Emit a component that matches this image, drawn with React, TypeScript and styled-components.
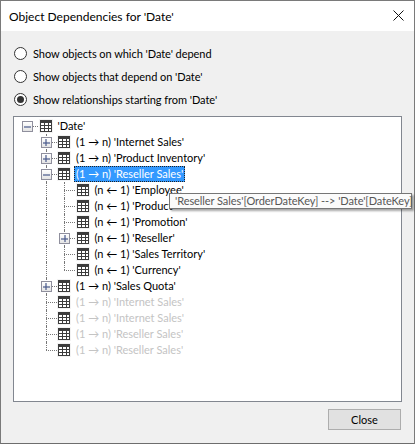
import React from 'react';
import styled, { createGlobalStyle } from 'styled-components';

const GlobalStyle = createGlobalStyle`
  html, body {
    margin: 0;
    padding: 0;
    background: #fff;
  }
  body {
    font-family: Lato, "Liberation Sans", "DejaVu Sans", sans-serif;
    font-size: 11px;
    color: #000;
  }
`;

const Window = styled.div`
  position: relative;
  box-sizing: border-box;
  width: 415px;
  height: 444px;
  display: flex;
  flex-direction: column;
  background: #f0f0f0;
  border: 1px solid #7a7a7a;
  border-bottom-color: #6d6d6d;
`;

const TitleBar = styled.div`
  height: 30px;
  flex: none;
  display: flex;
  align-items: center;
  justify-content: space-between;
  padding: 0 10px 0 8px;
  background: #fff;
  font-size: 12px;
`;

const CloseIcon = styled.svg`
  width: 11px;
  height: 11px;
  display: block;
  margin-bottom: 1px;
`;

const Body = styled.div`
  flex: 1;
  display: flex;
  flex-direction: column;
  padding: 14px 12px 12px 12px;
  min-height: 0;
`;

const RadioGroup = styled.div`
  display: flex;
  flex-direction: column;
  gap: 7px;
  padding-left: 1px;
  margin-bottom: 9px;
  letter-spacing: -0.05px;
`;

const RadioRow = styled.label`
  display: flex;
  align-items: center;
  gap: 6px;
  height: 16px;
`;

const RadioMark = styled.span<{ $checked?: boolean }>`
  box-sizing: border-box;
  width: 13px;
  height: 13px;
  border-radius: 50%;
  border: 1px solid #333;
  background: #fff;
  display: flex;
  align-items: center;
  justify-content: center;
  &::after {
    content: '';
    display: ${(p) => (p.$checked ? 'block' : 'none')};
    width: 7px;
    height: 7px;
    border-radius: 50%;
    background: #333;
  }
`;

const TreeBox = styled.div`
  box-sizing: border-box;
  height: 286px;
  flex: none;
  background: #fff;
  border: 1px solid #828790;
  padding: 1px 0 0 4px;
`;

const Row = styled.div`
  display: flex;
  height: 16px;
  align-items: stretch;
`;

const Guide = styled.span<{ $kind: 'blank' | 'pipe' | 'tee' | 'elbow' | 'dash' }>`
  position: relative;
  width: 18.5px;
  flex: none;
  &::before {
    content: '';
    position: absolute;
    left: 9px;
    top: 0;
    height: ${(p) => (p.$kind === 'elbow' ? '8px' : '100%')};
    border-left: 1px dotted #777;
    display: ${(p) => (p.$kind === 'blank' || p.$kind === 'dash' ? 'none' : 'block')};
  }
  &::after {
    content: '';
    position: absolute;
    left: 9px;
    top: 8px;
    width: 11px;
    border-top: 1px dotted #777;
    display: ${(p) => (p.$kind === 'blank' || p.$kind === 'pipe' ? 'none' : 'block')};
  }
`;

const Expander = styled.span<{ $open?: boolean }>`
  position: absolute;
  z-index: 1;
  box-sizing: border-box;
  left: 4px;
  top: 3px;
  width: 11px;
  height: 11px;
  background: linear-gradient(#fff, #e4e4e4);
  border: 1px solid #8f8f9d;
  &::before {
    content: '';
    position: absolute;
    left: 1px;
    top: 3.5px;
    width: 7px;
    height: 2px;
    background: #4a5a8c;
    transform: scaleY(0.6);
  }
  &::after {
    content: '';
    display: ${(p) => (p.$open ? 'none' : 'block')};
    position: absolute;
    left: 3.5px;
    top: 1px;
    width: 2px;
    height: 7px;
    background: #4a5a8c;
    transform: scaleX(0.6);
  }
`;

const TableGlyph = styled.svg`
  width: 14px;
  height: 14px;
  flex: none;
  margin: 1px 0 0 2px;
  display: block;
`;

const Label = styled.span<{ $muted?: boolean; $selected?: boolean }>`
  box-sizing: border-box;
  margin-left: 3px;
  padding: 0 2px;
  height: 16px;
  line-height: 15px;
  white-space: nowrap;
  color: ${(p) => (p.$selected ? '#fff' : p.$muted ? '#c4c4c4' : '#000')};
  background: ${(p) => (p.$selected ? '#3399ff' : 'transparent')};
  outline: ${(p) => (p.$selected ? '1px dotted #222' : 'none')};
  outline-offset: -1px;
`;

const Footer = styled.div`
  flex: 1;
  display: flex;
  justify-content: flex-end;
  align-items: flex-start;
  padding: 7px 1px 0 0;
`;

const CloseButton = styled.button`
  box-sizing: border-box;
  width: 73px;
  height: 21px;
  padding: 0;
  font: inherit;
  color: #000;
  background: #e1e1e1;
  border: 1px solid #adadad;
`;

const Tip = styled.div`
  position: absolute;
  left: 168px;
  top: 192px;
  box-sizing: border-box;
  width: 243px;
  height: 16px;
  padding: 0 0 0 5px;
  line-height: 14px;
  white-space: nowrap;
  letter-spacing: -0.07px;
  color: #575757;
  background: #fbfbfb;
  border: 1px solid #767676;
  box-shadow: 2px 2px 2px rgba(0, 0, 0, 0.35);
`;

const TableIcon = () => (
  <TableGlyph viewBox="0 0 14 14" shapeRendering="crispEdges">
    <rect x="0" y="0" width="14" height="14" fill="#f3f3f3" />
    <rect x="1" y="1" width="12" height="12" fill="#3c3c3c" />
    <rect x="2" y="4" width="2.5" height="2" fill="#fff" />
    <rect x="5.5" y="4" width="3" height="2" fill="#fff" />
    <rect x="9.5" y="4" width="2.5" height="2" fill="#fff" />
    <rect x="2" y="7" width="2.5" height="2" fill="#fff" />
    <rect x="5.5" y="7" width="3" height="2" fill="#fff" />
    <rect x="9.5" y="7" width="2.5" height="2" fill="#fff" />
    <rect x="2" y="10" width="2.5" height="2" fill="#fff" />
    <rect x="5.5" y="10" width="3" height="2" fill="#fff" />
    <rect x="9.5" y="10" width="2.5" height="2" fill="#fff" />
  </TableGlyph>
);

type GuideKind = 'blank' | 'pipe' | 'tee' | 'elbow' | 'dash';

type Node = {
  guides: GuideKind[];
  text: string;
  toggle?: 'open' | 'closed';
  muted?: boolean;
  selected?: boolean;
};

const nodes: Node[] = [
  { guides: ['dash'], toggle: 'open', text: "'Date'" },
  { guides: ['blank', 'tee'], toggle: 'closed', text: "(1 → n) 'Internet Sales'" },
  { guides: ['blank', 'tee'], toggle: 'closed', text: "(1 → n) 'Product Inventory'" },
  { guides: ['blank', 'tee'], toggle: 'open', text: "(1 → n) 'Reseller Sales'", selected: true },
  { guides: ['blank', 'pipe', 'tee'], text: "(n ← 1) 'Employee'" },
  { guides: ['blank', 'pipe', 'tee'], text: "(n ← 1) 'Product'" },
  { guides: ['blank', 'pipe', 'tee'], text: "(n ← 1) 'Promotion'" },
  { guides: ['blank', 'pipe', 'tee'], toggle: 'closed', text: "(n ← 1) 'Reseller'" },
  { guides: ['blank', 'pipe', 'tee'], text: "(n ← 1) 'Sales Territory'" },
  { guides: ['blank', 'pipe', 'elbow'], text: "(n ← 1) 'Currency'" },
  { guides: ['blank', 'tee'], toggle: 'closed', text: "(1 → n) 'Sales Quota'" },
  { guides: ['blank', 'tee'], text: "(1 → n) 'Internet Sales'", muted: true },
  { guides: ['blank', 'tee'], text: "(1 → n) 'Internet Sales'", muted: true },
  { guides: ['blank', 'tee'], text: "(1 → n) 'Reseller Sales'", muted: true },
  { guides: ['blank', 'elbow'], text: "(1 → n) 'Reseller Sales'", muted: true },
];

const radios = [
  { text: "Show objects on which 'Date' depend" },
  { text: "Show objects that depend on 'Date'" },
  { text: "Show relationships starting from 'Date'", checked: true },
];

export default function App() {
  return (
    <Window>
      <GlobalStyle />
      <TitleBar>
        <span>Object Dependencies for 'Date'</span>
        <CloseIcon viewBox="0 0 11 11">
          <path d="M0.5 0.5 L10.5 10.5 M10.5 0.5 L0.5 10.5" stroke="#111" strokeWidth="1" fill="none" />
        </CloseIcon>
      </TitleBar>
      <Body>
        <RadioGroup>
          {radios.map((r) => (
            <RadioRow key={r.text}>
              <RadioMark $checked={r.checked} />
              {r.text}
            </RadioRow>
          ))}
        </RadioGroup>
        <TreeBox>
          {nodes.map((n, i) => (
            <Row key={i}>
              {n.guides.map((g, j) => (
                <Guide key={j} $kind={g}>
                  {j === n.guides.length - 1 && n.toggle && <Expander $open={n.toggle === 'open'} />}
                </Guide>
              ))}
              <TableIcon />
              <Label $muted={n.muted} $selected={n.selected}>{n.text}</Label>
            </Row>
          ))}
        </TreeBox>
        <Footer>
          <CloseButton>Close</CloseButton>
        </Footer>
      </Body>
      <Tip>'Reseller Sales'[OrderDateKey] --&gt; 'Date'[DateKey]</Tip>
    </Window>
  );
}
